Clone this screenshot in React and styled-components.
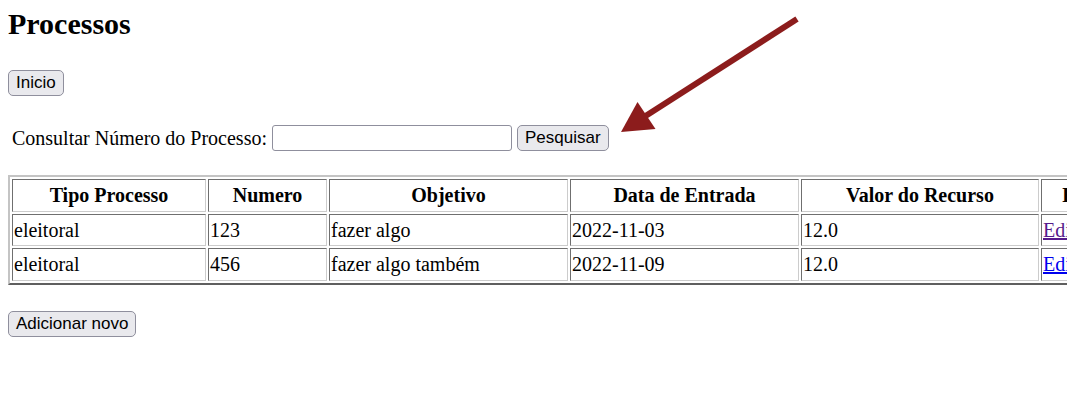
import React from "react";
import styled, { createGlobalStyle } from "styled-components";

const GlobalStyle = createGlobalStyle`
  html, body {
    margin: 0;
    padding: 0;
    overflow: hidden;
    background: #ffffff;
  }
  body {
    font-family: "Liberation Serif", "Times New Roman", serif;
    font-size: 20px;
    color: #000;
  }
`;

const Page = styled.div`
  position: relative;
  width: 1067px;
  height: 412px;
  padding: 0 8px;
  box-sizing: border-box;
`;

const Title = styled.h2`
  margin: 7px 0 0;
  font-size: 30px;
  line-height: 34px;
  font-weight: bold;
`;

const Bar = styled.div`
  display: flex;
  align-items: center;
  gap: 5px;
  margin-top: ${(p) => p.$top}px;
  padding-left: ${(p) => p.$indent || 0}px;
  height: 26px;
`;

const Button = styled.button`
  height: 26px;
  padding: 0 7px;
  box-sizing: border-box;
  font-family: "Liberation Sans", Arial, sans-serif;
  font-size: 17px;
  color: #000;
  background: #e9e9ed;
  border: 1px solid #8f8f9d;
  border-radius: 5px;
`;

const Label = styled.span`
  white-space: nowrap;
`;

const Input = styled.input`
  width: 240px;
  height: 26px;
  box-sizing: border-box;
  border: 1px solid #8f8f9d;
  border-radius: 3px;
  background: #fff;
  padding: 0 3px;
  font-size: 16px;
`;

const Table = styled.table`
  margin-top: 24px;
  border-collapse: separate;
  border-spacing: 2px;
  border-style: solid;
  border-width: 2px;
  border-color: #c4c4c4 #5f5f5f #5f5f5f #c4c4c4;
  table-layout: fixed;
  width: ${(p) => p.$width}px;
`;

const Col = styled.col`
  width: ${(p) => p.$w}px;
`;

const Cell = styled.td`
  box-sizing: border-box;
  border-style: solid;
  border-width: 1px;
  border-color: #6f6f6f #cccccc #cccccc #6f6f6f;
  padding: 3px 1px;
  line-height: 24.5px;
  font-size: 20px;
  white-space: nowrap;
  overflow: hidden;
  text-align: left;
  vertical-align: middle;
`;

const Head = styled(Cell).attrs({ as: "th" })`
  font-weight: bold;
  text-align: center;
`;

const Link = styled.a`
  color: ${(p) => (p.$visited ? "#551a8b" : "#0000ee")};
  text-decoration: underline;
`;

const Overlay = styled.svg`
  position: absolute;
  top: 0;
  left: 0;
  pointer-events: none;
`;

/* outer (border-box) widths of the columns */
const columns = [
  { title: "Tipo Processo", w: 194 },
  { title: "Numero", w: 119 },
  { title: "Objetivo", w: 239 },
  { title: "Data de Entrada", w: 229 },
  { title: "Valor do Recurso", w: 238 },
  { title: "Editar", w: 98 },
  { title: "Excluir", w: 98 },
];

const tableWidth =
  columns.reduce((s, c) => s + c.w, 0) + (columns.length + 1) * 2 + 4;

const rows = [
  { tipo: "eleitoral", numero: "123", objetivo: "fazer algo", data: "2022-11-03", valor: "12.0", visited: true },
  { tipo: "eleitoral", numero: "456", objetivo: "fazer algo também", data: "2022-11-09", valor: "12.0", visited: false },
];

export default function App() {
  return (
    <>
      <GlobalStyle />
      <Page>
        <Title>Processos</Title>
        <Bar $top={29}>
          <Button>Inicio</Button>
        </Bar>
        <Bar $top={29} $indent={4}>
          <Label>Consultar Número do Processo:</Label>
          <Input type="text" />
          <Button>Pesquisar</Button>
        </Bar>
        <Table $width={tableWidth}>
          <colgroup>
            {columns.map((c) => (
              <Col key={c.title} $w={c.w} />
            ))}
          </colgroup>
          <thead>
            <tr>
              {columns.map((c) => (
                <Head key={c.title}>{c.title}</Head>
              ))}
            </tr>
          </thead>
          <tbody>
            {rows.map((r) => (
              <tr key={r.numero}>
                <Cell>{r.tipo}</Cell>
                <Cell>{r.numero}</Cell>
                <Cell>{r.objetivo}</Cell>
                <Cell>{r.data}</Cell>
                <Cell>{r.valor}</Cell>
                <Cell>
                  <Link href="#" $visited={r.visited}>Editar</Link>
                </Cell>
                <Cell>
                  <Link href="#" $visited={r.visited}>Excluir</Link>
                </Cell>
              </tr>
            ))}
          </tbody>
        </Table>
        <Bar $top={26}>
          <Button>Adicionar novo</Button>
        </Bar>
        <Overlay width="1067" height="412" viewBox="0 0 1067 412">
          <line x1="797" y1="12" x2="644" y2="110" stroke="#8c1c1c" strokeWidth="6" />
          <polygon points="621,125 637.5,95 655.5,122" fill="#8c1c1c" />
        </Overlay>
      </Page>
    </>
  );
}
